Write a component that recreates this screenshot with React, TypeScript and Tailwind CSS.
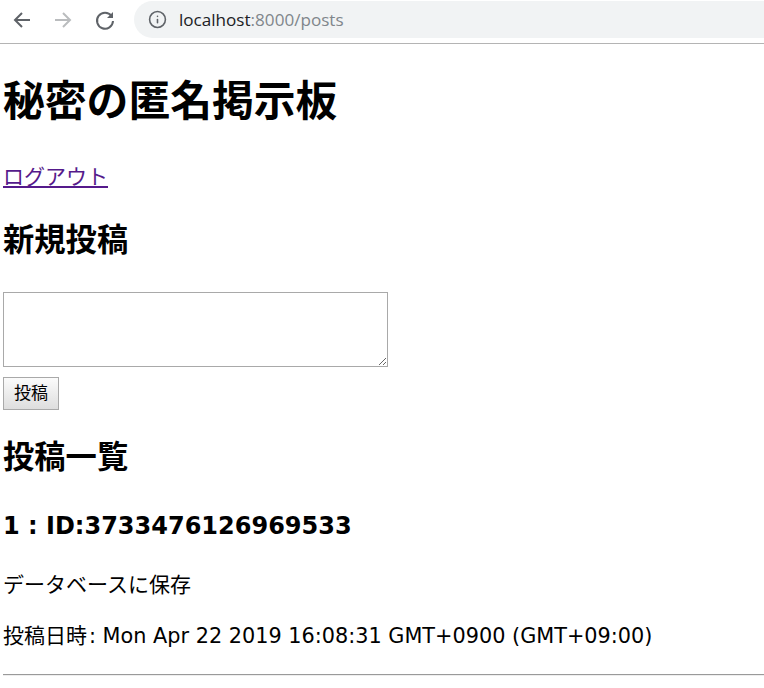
import { Info } from "lucide-react";

const sans = "font-['DejaVu_Sans','Noto_Sans_CJK_JP',sans-serif]";
const cjk = "font-['Noto_Sans_CJK_JP','DejaVu_Sans',sans-serif]";

function Toolbar() {
  return (
    <div className="flex h-11 items-center border-b border-[#b4b4b4] bg-white pb-1">
      <svg width="24" height="24" viewBox="0 0 24 24" className="ml-[10px]" fill="none" stroke="#5f6368" strokeWidth="2">
        <path d="M20 12H5M12 5l-7 7 7 7" />
      </svg>
      <svg width="24" height="24" viewBox="0 0 24 24" className="ml-[17px]" fill="none" stroke="#babcbe" strokeWidth="2">
        <path d="M4 12h15M12 5l7 7-7 7" />
      </svg>
      <svg width="24" height="24" viewBox="0 0 24 24" className="ml-[18px]" fill="none" stroke="#5f6368" strokeWidth="2">
        <path d="M18.5 8A8 8 0 1 0 20 13" />
        <path d="M20 4v6h-6" fill="#5f6368" stroke="none" />
      </svg>
      <div className="ml-[17px] flex h-[37px] flex-1 items-center rounded-l-full bg-[#f1f3f4] pl-[14px]">
        <Info size={19} color="#5f6368" strokeWidth={2} />
        <span className="ml-[12px] font-['Open_Sans',sans-serif] text-[17.1px] text-[#202124]">
          localhost<span className="text-[#80868b]">:8000/posts</span>
        </span>
      </div>
    </div>
  );
}

export default function App() {
  return (
    <div className={`h-[688px] w-[764px] overflow-hidden bg-white text-black ${sans}`}>
      <Toolbar />
      <div className="pl-[3px]">
        <h1 className={`mt-[24px] text-[41.8px] leading-[60px] font-bold ${cjk}`}>秘密の匿名掲示板</h1>
        <a href="#" className={`mt-[32px] block w-fit text-[21px] leading-[30px] text-[#551a8b] underline ${cjk}`}>
          ログアウト
        </a>
        <h2 className={`mt-[25px] text-[31.3px] leading-[45px] font-bold ${cjk}`}>新規投稿</h2>
        <textarea className="mt-[32px] block h-[75px] w-[385px] resize border border-[#a9a9a9] bg-white" />
        <button className={`mt-[10px] block h-[33px] w-[56px] border border-[#a9a9a9] bg-gradient-to-b from-[#fbfbfb] to-[#dedede] pb-[4px] text-[17px] ${cjk}`}>
          投稿
        </button>
        <h2 className={`mt-[22px] text-[31.3px] leading-[45px] font-bold ${cjk}`}>投稿一覧</h2>
        <h3 className="mt-[32px] text-[24px] leading-[35px] font-bold">1 : ID:3733476126969533</h3>
        <p className={`mt-[24px] text-[21px] leading-[30px] ${cjk}`}>データベースに保存</p>
        <p className="mt-[21px] text-[20.8px] leading-[30px]">
          <span className={`mr-[2px] text-[21px] ${cjk}`}>投稿日時</span>: Mon Apr 22 2019 16:08:31 GMT+0900 (GMT+09:00)
        </p>
        <hr className="mt-[23px] border-t border-b border-t-[#9a9a9a] border-b-[#eeeeee]" />
      </div>
    </div>
  );
}
